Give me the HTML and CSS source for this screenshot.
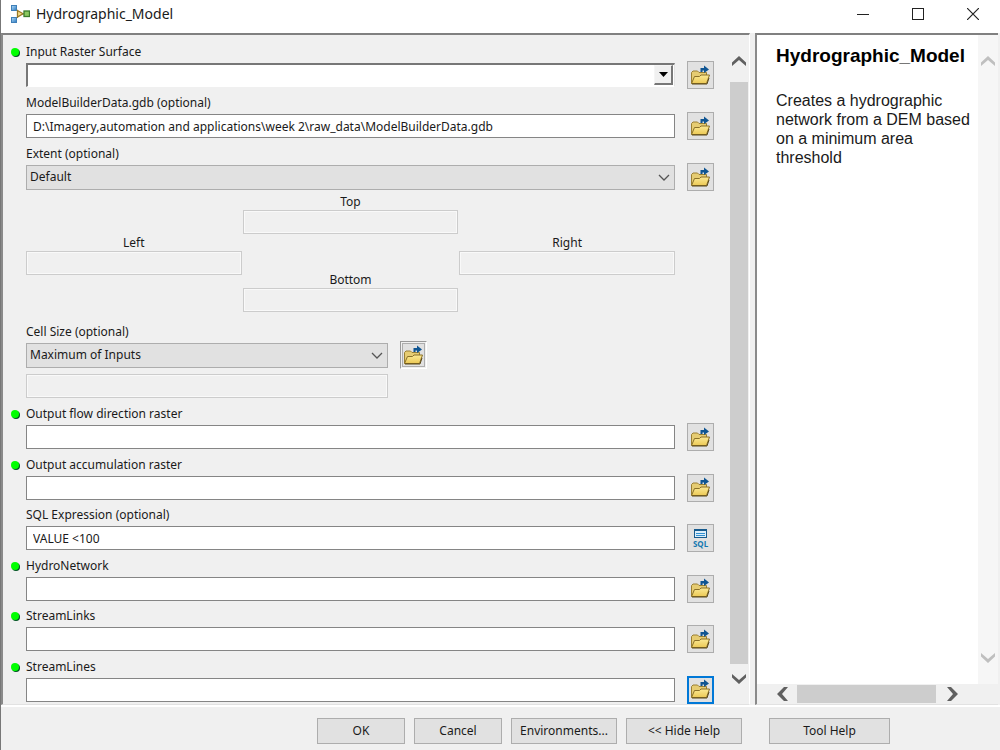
FILE: index.html
```html
<!DOCTYPE html>
<html lang="en">
<head>
<meta charset="utf-8">
<meta name="viewport" content="width=device-width, initial-scale=1">
<title>Hydrographic_Model</title>
<link rel="stylesheet" href="styles.css">
</head>
<body>
<svg class="defs" aria-hidden="true">
  <defs>
    <linearGradient id="fold" x1="0" y1="0" x2="0" y2="1"><stop offset="0" stop-color="#fbe994"/><stop offset="1" stop-color="#ecc955"/></linearGradient>
    <linearGradient id="blue" x1="0" y1="0" x2="1" y2="1"><stop offset="0" stop-color="#b5dcf8"/><stop offset="1" stop-color="#2878c0"/></linearGradient>
  </defs>
  <symbol id="folder" viewBox="0 0 21 21">
    <path d="M1.500 18.500V7.500L3 6H7.500L9 7.500H16.500V11" fill="#e6cc72" stroke="#9a7f32"/>
    <path d="M1.500 18.500L4.500 11.500H9.500L11 10H19.500L16.500 18.500Z" fill="url(#fold)" stroke="#8a7028"/>
    <path d="M2 19H17L19 13" fill="none" stroke="#5c4a18"/>
    <path d="M10.500 7V3H14V.5L19 4.500L14 8V5.500H12.500V7Z" fill="#0f5592"/>
  </symbol>
  <symbol id="chev" viewBox="0 0 14 10"><path d="M0 6.500L7 0L14 6.500V10L7 4L0 10Z" fill="currentColor"/></symbol>
  <symbol id="thin" viewBox="0 0 12 8"><path d="M1 1L6 6L11 1" fill="none" stroke="#555" stroke-width="1.300"/></symbol>
</svg>
<div class="window">
  <header class="titlebar">
    <svg class="app-icon" viewBox="0 0 20 20" aria-hidden="true">
      <path d="M6 5L9 8M6 15L9 12M12 10H15" stroke="#777" fill="none"/>
      <rect x="1.500" y="1.500" width="5" height="5" fill="url(#blue)" stroke="#3f7fb8"/>
      <rect x="1.500" y="13.500" width="5" height="5" fill="url(#blue)" stroke="#3f7fb8"/>
      <path d="M7.500 6.500L13 9.800L7.500 13Z" fill="#f7dc86" stroke="#9b7a27" stroke-width="1.300"/>
      <rect x="14" y="7" width="5.500" height="5.500" fill="#8cc860" stroke="#3b7b2c" stroke-width="1.300"/>
    </svg>
    <h1 class="title">Hydrographic_Model</h1>
    <div class="window-controls">
      <button type="button" aria-label="Minimize"><svg viewBox="0 0 12 12"><path d="M0 6.500H12" stroke="#222"/></svg></button>
      <button type="button" aria-label="Maximize"><svg viewBox="0 0 12 12"><rect x=".5" y=".5" width="11" height="11" fill="none" stroke="#222"/></svg></button>
      <button type="button" aria-label="Close"><svg viewBox="0 0 12 12"><path d="M0 0L12 12M12 0L0 12" stroke="#222" stroke-width="1.200"/></svg></button>
    </div>
  </header>
  <main class="content">
    <section class="panel form-panel">
      <form class="form" id="tool-form">
        <div class="group">
          <div class="field">
            <i class="dot"></i><label for="surface">Input Raster Surface</label>
            <div class="combo sunken"><select id="surface"><option></option></select><span class="drop"><svg viewBox="0 0 9 5"><path d="M0 0H9L4.500 5Z"/></svg></span></div>
            <button type="button" class="browse" aria-label="Browse"><svg><use href="#folder"/></svg></button>
          </div>
          <div class="field">
            <label for="gdb">ModelBuilderData.gdb (optional)</label>
            <input class="box" id="gdb" type="text" value="D:\Imagery,automation and applications\week 2\raw_data\ModelBuilderData.gdb">
            <button type="button" class="browse" aria-label="Browse"><svg><use href="#folder"/></svg></button>
          </div>
          <div class="field">
            <label for="extent">Extent (optional)</label>
            <div class="combo flat"><select id="extent"><option>Default</option></select><svg class="caret"><use href="#thin"/></svg></div>
            <button type="button" class="browse" aria-label="Browse"><svg><use href="#folder"/></svg></button>
          </div>
        </div>
        <div class="extent">
          <div class="side"><label class="edge">Left<input class="box" type="text" disabled></label></div>
          <div class="middle">
            <label class="edge">Top<input class="box" type="text" disabled></label>
            <label class="edge">Bottom<input class="box" type="text" disabled></label>
          </div>
          <div class="side"><label class="edge">Right<input class="box" type="text" disabled></label></div>
        </div>
        <div class="cell">
          <div class="field">
            <label for="cell">Cell Size (optional)</label>
            <div class="combo flat"><select id="cell"><option>Maximum of Inputs</option></select><svg class="caret"><use href="#thin"/></svg></div>
            <button type="button" class="browse pressed" aria-label="Browse"><svg><use href="#folder"/></svg></button>
            <input class="box" type="text" aria-label="Cell size value" disabled>
          </div>
        </div>
        <div class="group outputs">
          <div class="field">
            <i class="dot"></i><label for="flow">Output flow direction raster</label>
            <input class="box" id="flow" type="text">
            <button type="button" class="browse" aria-label="Browse"><svg><use href="#folder"/></svg></button>
          </div>
          <div class="field">
            <i class="dot"></i><label for="accum">Output accumulation raster</label>
            <input class="box" id="accum" type="text">
            <button type="button" class="browse" aria-label="Browse"><svg><use href="#folder"/></svg></button>
          </div>
          <div class="field">
            <label for="sql">SQL Expression (optional)</label>
            <input class="box" id="sql" type="text" value="VALUE &lt;100">
            <button type="button" class="browse" aria-label="SQL builder"><svg viewBox="0 0 21 21"><rect x="4.500" y="1.500" width="12" height="8" fill="#dceefa" stroke="#175b8e"/><path d="M4 2H17" stroke="#175b8e" stroke-width="2"/><path d="M6 5.500H15M6 7.500H15" stroke="#2f8fd0"/><text class="sql-text" x="10.500" y="19" text-anchor="middle">SQL</text></svg></button>
          </div>
          <div class="field">
            <i class="dot"></i><label for="hydro">HydroNetwork</label>
            <input class="box" id="hydro" type="text">
            <button type="button" class="browse" aria-label="Browse"><svg><use href="#folder"/></svg></button>
          </div>
          <div class="field">
            <i class="dot"></i><label for="links">StreamLinks</label>
            <input class="box" id="links" type="text">
            <button type="button" class="browse" aria-label="Browse"><svg><use href="#folder"/></svg></button>
          </div>
          <div class="field">
            <i class="dot"></i><label for="lines">StreamLines</label>
            <input class="box" id="lines" type="text">
            <button type="button" class="browse focused" aria-label="Browse"><svg><use href="#folder"/></svg></button>
          </div>
        </div>
      </form>
      <div class="vbar form-bar">
        <svg class="arrow"><use href="#chev"/></svg>
        <div class="thumb"></div>
        <svg class="arrow down"><use href="#chev"/></svg>
      </div>
    </section>
    <aside class="panel help">
      <article class="help-text">
        <h2>Hydrographic_Model</h2>
        <p>Creates a hydrographic network from a DEM based on a minimum area threshold</p>
      </article>
      <div class="vbar help-bar">
        <svg class="arrow"><use href="#chev"/></svg>
        <svg class="arrow down"><use href="#chev"/></svg>
      </div>
      <div class="hbar">
        <svg class="arrow-h" viewBox="0 0 11 14"><path d="M7 0H11L5 7L11 14H7L0 7Z" fill="currentColor"/></svg>
        <div class="thumb"></div>
        <svg class="arrow-h" viewBox="0 0 11 14"><path d="M4 0H0L6 7L0 14H4L11 7Z" fill="currentColor"/></svg>
      </div>
    </aside>
  </main>
  <footer class="footer">
    <button type="submit" form="tool-form" class="btn">OK</button>
    <button type="button" class="btn">Cancel</button>
    <button type="button" class="btn wide">Environments...</button>
    <button type="button" class="btn wider">&lt;&lt; Hide Help</button>
    <button type="button" class="btn wider tool-help">Tool Help</button>
  </footer>
</div>
</body>
</html>
```
FILE: styles.css
```css
* { box-sizing: border-box; }
body {
  margin: 0;
  background: #f0f0f0;
  color: #1a1a1a;
  font: 12px/18px "Noto Sans", "Open Sans", sans-serif;
}
button, input, select { font: inherit; color: inherit; margin: 0; }
svg { display: block; }
.defs { position: absolute; width: 0; height: 0; }
.window {
  display: flex;
  flex-direction: column;
  min-height: 100vh;
  border-left: 1px solid #777;
}

.titlebar { display: flex; align-items: center; height: 33px; padding-bottom: 5px; background: #fff; }
.app-icon { width: 20px; height: 20px; margin: 0 6px 0 9px; }
.title { flex: 1; margin: 0; font-size: 14px; font-weight: 400; }
.window-controls { display: flex; }
.window-controls button {
  display: grid;
  place-items: center;
  width: 55px;
  height: 28px;
  padding: 0;
  border: 0;
  background: none;
}
.window-controls svg { width: 12px; height: 12px; }

.content {
  flex: 1;
  display: grid;
  grid-template-columns: minmax(0, 1fr) 243px;
  gap: 5px;
  padding-right: 2px;
  border-bottom: 2px solid #fff;
}
.panel { border-top: 2px solid #808080; border-left: 2px solid #8a8a8a; border-bottom: 1px solid #e2e2e2; }
.form-panel { display: flex; padding-right: 1px; border-right: 1px solid #fff; }
.form { flex: 1; min-width: 0; display: flex; flex-direction: column; padding: 8px 16px 0 7px; }
.group { display: flex; flex-direction: column; gap: 5px; }
.outputs { flex: 1; gap: 0; justify-content: space-between; }
.field {
  display: grid;
  grid-template-columns: 16px minmax(0, 1fr) 39px;
  grid-template-rows: 18px 28px;
  align-items: center;
}
.field > label { grid-area: 1 / 2; }
.field > .box, .combo { grid-column: 2; }
.dot {
  grid-area: 1 / 1;
  width: 8px;
  height: 8px;
  margin-left: 1px;
  border-radius: 50%;
  background: #0f0;
  box-shadow: 1px 1px 0 #052;
}
.box {
  width: 100%;
  height: 24px;
  padding: 0 6px;
  border: 1px solid #858585;
  border-radius: 0;
  background: #fff;
}
.box:disabled { border-color: #ccc; background: #f0f0f0; box-shadow: inset 0 0 0 1px #f9f9f9; }
.combo { position: relative; height: 25px; }
.combo select {
  display: block;
  appearance: none;
  width: 100%;
  height: 100%;
  padding: 0 24px 0 3px;
  border: 1px solid #adadad;
  border-radius: 0;
  background: #e1e1e1;
}
.sunken { height: 24px; }
.sunken select { border: 2px solid #777; border-right: 1px solid #e3e3e3; border-bottom: 1px solid #fff; background: #fff; }
.drop {
  position: absolute;
  top: 2px;
  right: 2px;
  bottom: 2px;
  display: grid;
  place-items: center;
  width: 19px;
  border: 1px solid #f5f5f5;
  border-right: 2px solid #777;
  border-bottom: 2px solid #777;
  background: #f0f0f0;
  pointer-events: none;
}
.drop svg { width: 9px; height: 5px; }
.caret { position: absolute; top: 9px; right: 5px; width: 12px; height: 8px; pointer-events: none; }
.browse {
  grid-area: 2 / 3;
  justify-self: end;
  display: grid;
  place-items: center;
  width: 27px;
  height: 28px;
  padding: 0;
  border: 1px solid #adadad;
  background: #e1e1e1;
}
.browse svg { width: 21px; height: 21px; }
.pressed { border-color: #999 #fff #fff #999; box-shadow: inset 0 0 0 1px #f0f0f0, inset 0 0 0 2px #adadad; }
.focused { border: 2px solid #0078d7; }
.sql-text { font: 700 8px "Noto Sans", sans-serif; fill: #1679b0; }

.extent { display: grid; grid-template-columns: repeat(3, minmax(0, 1fr)); gap: 1px; margin: 3px 39px 11px 16px; }
.side { padding-top: 41px; }
.middle { display: flex; flex-direction: column; gap: 38px; }
.edge { display: block; line-height: 16px; text-align: center; }
.edge .box { display: block; }
.cell { width: 62%; max-width: 417px; }
.cell .field { grid-template-rows: 18px 28px 36px; }
.cell .field > .box { align-self: start; margin-top: 5px; }

.vbar { display: flex; flex-direction: column; align-items: center; }
.form-bar { width: 18px; padding: 21px 0 20px; color: #606060; }
.arrow { width: 14px; height: 10px; }
.down { transform: rotate(180deg); }
.thumb { background: #cdcdcd; }
.form-bar .thumb { flex: 1; width: 100%; margin: 16px 0 10px; }
.help {
  display: grid;
  grid-template-columns: minmax(0, 1fr) 20px;
  grid-template-rows: 1fr 20px;
  background: #fff;
}
.help-text { padding: 9px 0 0 19px; font: 16px/19px "Liberation Sans", Arial, sans-serif; }
.help-text h2 { margin: 0 0 23px; font-size: 19px; line-height: 24px; color: #000; }
.help-text p { margin: 0; }
.help-bar { justify-content: space-between; padding: 21px 0; background: #f6f6f6; color: #bfbfbf; }
.hbar {
  grid-column: 1 / -1;
  display: flex;
  align-items: center;
  padding: 0 40px 0 20px;
  background: #f0f0f0;
  color: #606060;
}
.hbar .thumb { flex: 1; height: 18px; margin: 0 11px 0 9px; }
.arrow-h { width: 11px; height: 14px; }

.footer { display: flex; justify-content: flex-end; gap: 9px; padding: 11px 110px 6px 0; }
.btn { width: 88px; height: 26px; padding: 0; border: 1px solid #adadad; background: #e1e1e1; white-space: nowrap; }
.wide { width: 106px; }
.wider { width: 116px; }
.tool-help { width: 121px; margin-left: 18px; }
```
